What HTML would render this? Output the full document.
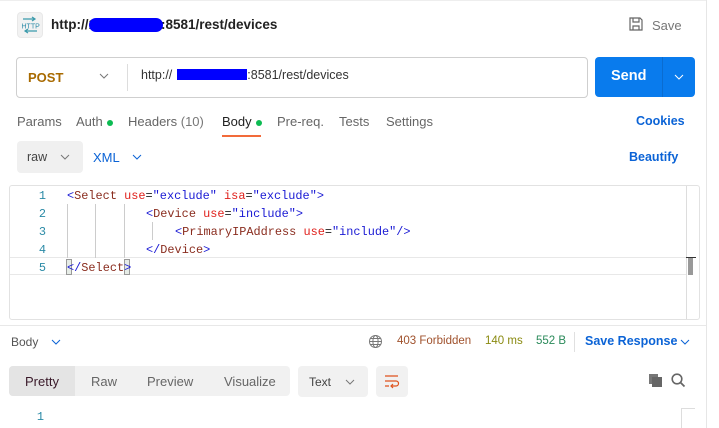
<!DOCTYPE html>
<html><head><meta charset="utf-8"><style>
*{margin:0;padding:0;box-sizing:border-box}
body{width:719px;height:428px;overflow:hidden;background:#fff;font-family:"Liberation Sans",sans-serif;font-size:13px;color:#212121;position:relative}
.a{position:absolute;white-space:nowrap}
.mono{font-family:"Liberation Mono",monospace;font-size:11.9px}
.ln{color:#2a8aa6;width:20px;text-align:right}
.t{color:#8a2d1f}.at{color:#e0211c}.s{color:#1a1ad4}.p{color:#555}
.dot{display:inline-block;width:6px;height:6px;border-radius:50%;background:#0cbb52;margin-left:4px;vertical-align:middle}
.blue{color:#0b63d6}
</style></head><body>
<div class="a" style="left:0;top:0;width:706px;height:1px;background:#eee"></div>
<div class="a" style="left:706px;top:0;width:1px;height:428px;background:#e6e6e6"></div>
<div class="a" style="left:17px;top:12px;width:26px;height:26px;border-radius:4px;background:#f2f2f2;border:1px solid #e8e8e8"></div>
<svg class="a" style="left:20px;top:15px" width="20" height="20" viewBox="0 0 20 20"><path d="M3 4h12M12 2l3 2-3 2" stroke="#3a9aab" fill="none" stroke-width="1.2"/><text x="1.5" y="13.5" font-family="Liberation Sans" font-size="7" fill="#2a8aa6">HTTP</text><path d="M5 16h12M8 14l-3 2 3 2" stroke="#3a9aab" fill="none" stroke-width="1.2"/></svg>
<div class="a" style="left:51px;top:17px;font-size:13.5px;font-weight:bold;color:#222">http://1<span style="display:inline-block;width:65px"></span>:8581/rest/devices</div>
<div class="a" style="left:89px;top:18px;width:74px;height:14px;background:#0000ff;border-radius:7px"></div>
<svg class="a" style="left:628px;top:16px" width="16" height="16" viewBox="0 0 16 16"><path d="M2 2h10l2 2v10H2z M5 2v4h6V2 M5 14v-4h6v4" stroke="#666" fill="none" stroke-width="1.2"/></svg>
<div class="a" style="left:652px;top:18px;color:#777;font-size:13px">Save</div>
<div class="a" style="left:16px;top:57px;width:572px;height:41px;border:1px solid #cfcfcf;border-radius:4px"></div>
<div class="a" style="left:28px;top:70px;color:#a86a00;font-weight:bold;font-size:13px">POST</div>
<svg class="a" style="left:99px;top:72px" width="10" height="8"><path d="M1 2l4 4 4-4" stroke="#777" fill="none"/></svg>
<div class="a" style="left:127px;top:64px;width:1px;height:27px;background:#ddd"></div>
<div class="a" style="left:141px;top:68px;color:#333;font-size:12.5px">http://<span style="display:inline-block;width:75px"></span>:8581/rest/devices</div>
<div class="a" style="left:177px;top:69px;width:70px;height:11px;background:#0000ff"></div>
<div class="a" style="left:595px;top:57px;width:100px;height:40px;background:#097bed;border-radius:4px"></div>
<div class="a" style="left:662px;top:57px;width:1px;height:40px;background:#0a6cd0"></div>
<div class="a" style="left:611px;top:68px;color:#fff;font-weight:bold;font-size:14.5px">Send</div>
<svg class="a" style="left:674px;top:74px" width="10" height="7"><path d="M1 1l4 4 4-4" stroke="#fff" fill="none"/></svg>
<div class="a" style="left:17px;top:114px;color:#666">Params</div>
<div class="a" style="left:76px;top:114px;color:#666">Auth<span class="dot"></span></div>
<div class="a" style="left:128px;top:114px;color:#666">Headers <span style="color:#777">(10)</span></div>
<div class="a" style="left:222px;top:114px;color:#222">Body<span class="dot"></span></div>
<div class="a" style="left:222px;top:135px;width:39px;height:2px;background:#f26b3a"></div>
<div class="a" style="left:277px;top:114px;color:#666">Pre-req.</div>
<div class="a" style="left:339px;top:114px;color:#666">Tests</div>
<div class="a" style="left:386px;top:114px;color:#666">Settings</div>
<div class="a blue" style="left:636px;top:114px;font-weight:bold;font-size:12.5px">Cookies</div>
<div class="a" style="left:17px;top:141px;width:66px;height:32px;background:#f0f0f0;border-radius:4px"></div>
<div class="a" style="left:27px;top:150px;color:#444;font-size:12.5px">raw</div>
<svg class="a" style="left:60px;top:154px" width="10" height="7"><path d="M1 1l4 4 4-4" stroke="#777" fill="none"/></svg>
<div class="a blue" style="left:93px;top:150px;font-size:13px">XML</div>
<svg class="a" style="left:132px;top:154px" width="10" height="7"><path d="M1 1l4 4 4-4" stroke="#0b63d6" fill="none"/></svg>
<div class="a blue" style="left:629px;top:150px;font-weight:bold;font-size:12.5px">Beautify</div>
<div class="a" style="left:9px;top:185px;width:691px;height:135px;border:1px solid #e2e2e2;border-radius:3px"></div>
<div class="a" style="left:686px;top:186px;width:1px;height:133px;background:#ddd"></div>
<div class="a" style="left:10px;top:257px;width:676px;height:18px;border-top:1px solid #e8e8e8;border-bottom:1px solid #e8e8e8"></div>
<div class="a" style="left:686px;top:257px;width:10px;height:1px;background:#333"></div>
<div class="a" style="left:688px;top:258px;width:5px;height:17px;background:#999"></div>
<div class="a" style="left:67px;top:204px;width:1px;height:54px;background:#ccc"></div>
<div class="a" style="left:95px;top:204px;width:1px;height:54px;background:#ccc"></div>
<div class="a" style="left:124px;top:204px;width:1px;height:54px;background:#ccc"></div>
<div class="a" style="left:152px;top:222px;width:1px;height:18px;background:#ccc"></div>
<div class="a" style="left:66px;top:259px;width:6px;height:16px;border:1px solid #999;background:#e6ece6"></div>
<div class="a" style="left:124px;top:259px;width:6px;height:16px;border:1px solid #999;background:#e6ece6"></div>
<div class="a mono ln" style="left:26px;top:189px">1</div>
<div class="a mono ln" style="left:26px;top:207px">2</div>
<div class="a mono ln" style="left:26px;top:225px">3</div>
<div class="a mono ln" style="left:26px;top:243px">4</div>
<div class="a mono ln" style="left:26px;top:261px">5</div>
<div class="a mono" style="left:67px;top:189px"><span class="s">&lt;</span><span class="t">Select</span> <span class="at">use</span>=<span class="s">"exclude"</span>  <span class="at">isa</span>=<span class="s">"exclude"</span><span class="s">&gt;</span></div>
<div class="a mono" style="left:146px;top:207px"><span class="s">&lt;</span><span class="t">Device</span> <span class="at">use</span>=<span class="s">"include"</span><span class="s">&gt;</span></div>
<div class="a mono" style="left:175px;top:225px"><span class="s">&lt;</span><span class="t">PrimaryIPAddress</span> <span class="at">use</span>=<span class="s">"include"</span><span class="s">/&gt;</span></div>
<div class="a mono" style="left:146px;top:243px"><span class="s">&lt;/</span><span class="t">Device</span><span class="s">&gt;</span></div>
<div class="a mono" style="left:67px;top:261px"><span class="s">&lt;/</span><span class="t">Select</span><span class="s">&gt;</span></div>
<div class="a" style="left:0;top:325px;width:706px;height:1px;background:#e8e8e8"></div>
<div class="a" style="left:11px;top:335px;color:#555;font-size:12px">Body</div>
<svg class="a" style="left:51px;top:339px" width="10" height="7"><path d="M1 1l4 4 4-4" stroke="#0b63d6" fill="none"/></svg>
<svg class="a" style="left:368px;top:334px" width="15" height="15" viewBox="0 0 15 15"><g stroke="#777" fill="none"><circle cx="7.5" cy="7.5" r="6"/><ellipse cx="7.5" cy="7.5" rx="2.6" ry="6"/><path d="M1.5 7.5h12M2.5 4.5h10M2.5 10.5h10"/></g></svg>
<div class="a" style="left:397px;top:335px;color:#a0522d;font-size:11.5px">403 Forbidden</div>
<div class="a" style="left:485px;top:335px;color:#8a8a10;font-size:11.5px">140 ms</div>
<div class="a" style="left:536px;top:335px;color:#2a8a5a;font-size:11.5px">552 B</div>
<div class="a" style="left:574px;top:332px;width:1px;height:20px;background:#e0e0e0"></div>
<div class="a blue" style="left:585px;top:334px;font-weight:bold;font-size:12.5px">Save Response</div>
<svg class="a" style="left:680px;top:339px" width="10" height="7"><path d="M1 1l4 4 4-4" stroke="#0b63d6" fill="none"/></svg>
<div class="a" style="left:9px;top:366px;width:281px;height:30px;background:#f1f1f1;border-radius:4px"></div>
<div class="a" style="left:9px;top:366px;width:66px;height:30px;background:#e4e4e4;border-radius:4px 0 0 4px"></div>
<div class="a" style="left:25px;top:374px;color:#3a1a2a;font-size:13px">Pretty</div>
<div class="a" style="left:91px;top:374px;color:#666;font-size:13px">Raw</div>
<div class="a" style="left:147px;top:374px;color:#666;font-size:13px">Preview</div>
<div class="a" style="left:224px;top:374px;color:#666;font-size:13px">Visualize</div>
<div class="a" style="left:298px;top:366px;width:70px;height:31px;background:#f1f1f1;border-radius:4px"></div>
<div class="a" style="left:309px;top:375px;color:#444;font-size:12px">Text</div>
<svg class="a" style="left:345px;top:379px" width="10" height="7"><path d="M1 1l4 4 4-4" stroke="#777" fill="none"/></svg>
<div class="a" style="left:376px;top:366px;width:32px;height:31px;background:#f1f1f1;border-radius:4px"></div>
<svg class="a" style="left:384px;top:374px" width="16" height="15" viewBox="0 0 16 15"><g stroke="#e0521c" fill="none" stroke-width="1.2"><path d="M1 2h13M1 7h11a2.5 2.5 0 010 5H7M9 10l-2 2 2 2M1 12h4"/></g></svg>
<svg class="a" style="left:648px;top:373px" width="15" height="15" viewBox="0 0 15 15"><rect x="1" y="1" width="9" height="10" fill="#777"/><rect x="4" y="4" width="10" height="10" fill="#666"/></svg>
<svg class="a" style="left:671px;top:373px" width="15" height="15" viewBox="0 0 15 15"><circle cx="6" cy="6" r="4.8" stroke="#666" stroke-width="1.6" fill="none"/><path d="M9.5 9.5l4 4" stroke="#666" stroke-width="1.8"/></svg>
<div class="a mono ln" style="left:24px;top:410px;color:#2a8aa6">1</div>
<div class="a" style="left:681px;top:408px;width:1px;height:20px;background:#ddd"></div>
<div class="a" style="left:681px;top:408px;width:14px;height:1px;background:#ddd"></div>
</body></html>
